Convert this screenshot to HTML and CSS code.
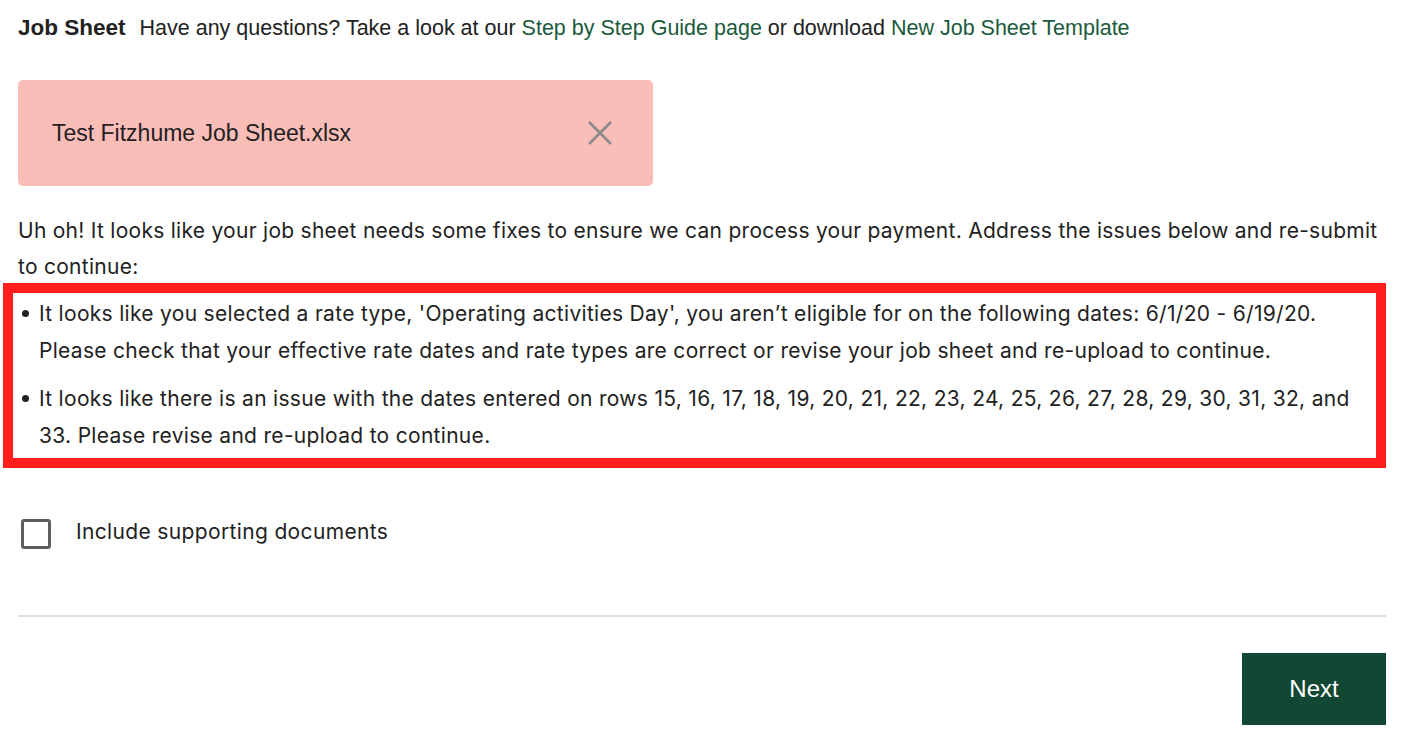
FILE: index.html
```html
<!DOCTYPE html>
<html lang="en">

<head>
    <meta charset="UTF-8">
    <meta name="viewport" content="width=device-width, initial-scale=1.0">
    <title>Job Sheet</title>
    <link rel="stylesheet" href="styles.css">
</head>

<body>
    <div class="container">
        <div class="intro">
            <span class="intro-title">Job Sheet</span>
            Have any questions? Take a look at our <a href="#">Step by Step Guide page</a> or download <a href="#">New Job Sheet Template</a>
        </div>

        <div class="file-card">
            <span class="file-name">Test Fitzhume Job Sheet.xlsx</span>
            <button class="file-remove" type="button" aria-label="Remove file">
                <svg width="26" height="24" viewBox="0 0 26 24">
                    <path d="M2 1 L24 23 M24 1 L2 23" stroke="#8a8a8a" stroke-width="2.6" fill="none" />
                </svg>
            </button>
        </div>

        <p class="message">Uh oh! It looks like your job sheet needs some fixes to ensure we can process your payment. Address the issues below and re-submit to continue:</p>

        <ul class="issues">
            <li>It looks like you selected a rate type, 'Operating activities Day', you aren’t eligible for on the following dates: 6/1/20 - 6/19/20. Please check that your effective rate dates and rate types are correct or revise your job sheet and re-upload to continue.</li>
            <li>It looks like there is an issue with the dates entered on rows 15, 16, 17, 18, 19, 20, 21, 22, 23, 24, 25, 26, 27, 28, 29, 30, 31, 32, and 33. Please revise and re-upload to continue.</li>
        </ul>

        <label class="check-row">
            <input type="checkbox" id="supporting">
            <span class="check-box"></span>
            <span class="check-label">Include supporting documents</span>
        </label>

        <hr class="divider">

        <div class="actions">
            <button type="submit" class="next-btn">Next</button>
        </div>
    </div>
</body>

</html>
```

FILE: styles.css
```css
body {
    font-family: "Inter", "Noto Sans", sans-serif;
    color: #222;
    background: #fff;
    margin: 0;
    padding: 0;
}

.container {
    width: 1368px;
    margin: 0 0 0 18px;
}

.intro {
    font-family: "Liberation Sans", Arial, sans-serif;
    font-size: 21.5px;
    line-height: 30px;
    padding-top: 13px;
    color: #222;
    white-space: nowrap;
}

.intro-title {
    font-weight: bold;
    font-size: 22.5px;
    margin-right: 8px;
}

.intro a {
    color: #1a5a3c;
    text-decoration: none;
}

.file-card {
    display: flex;
    align-items: center;
    justify-content: space-between;
    width: 635px;
    height: 106px;
    box-sizing: border-box;
    margin-top: 37px;
    padding: 0 40px 0 34px;
    background-color: #fbbdb8;
    border-radius: 5px;
    font-family: "Liberation Sans", Arial, sans-serif;
    font-size: 23px;
}

.file-remove {
    background: none;
    border: none;
    padding: 0;
    cursor: pointer;
    display: flex;
}

.message {
    font-size: 21px;
    letter-spacing: 0.27px;
    line-height: 36px;
    margin: 27px 0 0 0;
}

.issues {
    list-style: none;
    margin: -2px 0 0 -15px;
    padding: 2px 8px 4px 9px;
    border: 10px solid #fe1e1e;
    font-size: 21px;
    letter-spacing: 0.3px;
    line-height: 37px;
}

.issues li {
    position: relative;
    padding-left: 17px;
}

.issues li + li {
    margin-top: 11px;
}

.issues li::before {
    content: "";
    position: absolute;
    left: 0;
    top: 15px;
    width: 7px;
    height: 7px;
    border-radius: 50%;
    background: #222;
}

.check-row {
    display: flex;
    align-items: center;
    margin-top: 50px;
    font-size: 21px;
    letter-spacing: 0.35px;
    cursor: pointer;
}

.check-row input {
    display: none;
}

.check-label {
    margin-top: -4px;
}

.check-box {
    width: 30px;
    height: 30px;
    box-sizing: border-box;
    border: 3px solid #5e5e5e;
    border-radius: 3px;
    margin: 1px 25px 0 3px;
}

.divider {
    border: none;
    border-top: 2px solid #e0e0e0;
    margin: 66px 0 0 0;
}

.actions {
    display: flex;
    justify-content: flex-end;
    margin-top: 36px;
}

.next-btn {
    width: 144px;
    height: 72px;
    background-color: #124734;
    color: #fff;
    border: none;
    font-family: "Liberation Sans", Arial, sans-serif;
    font-size: 24px;
    cursor: pointer;
}
```
